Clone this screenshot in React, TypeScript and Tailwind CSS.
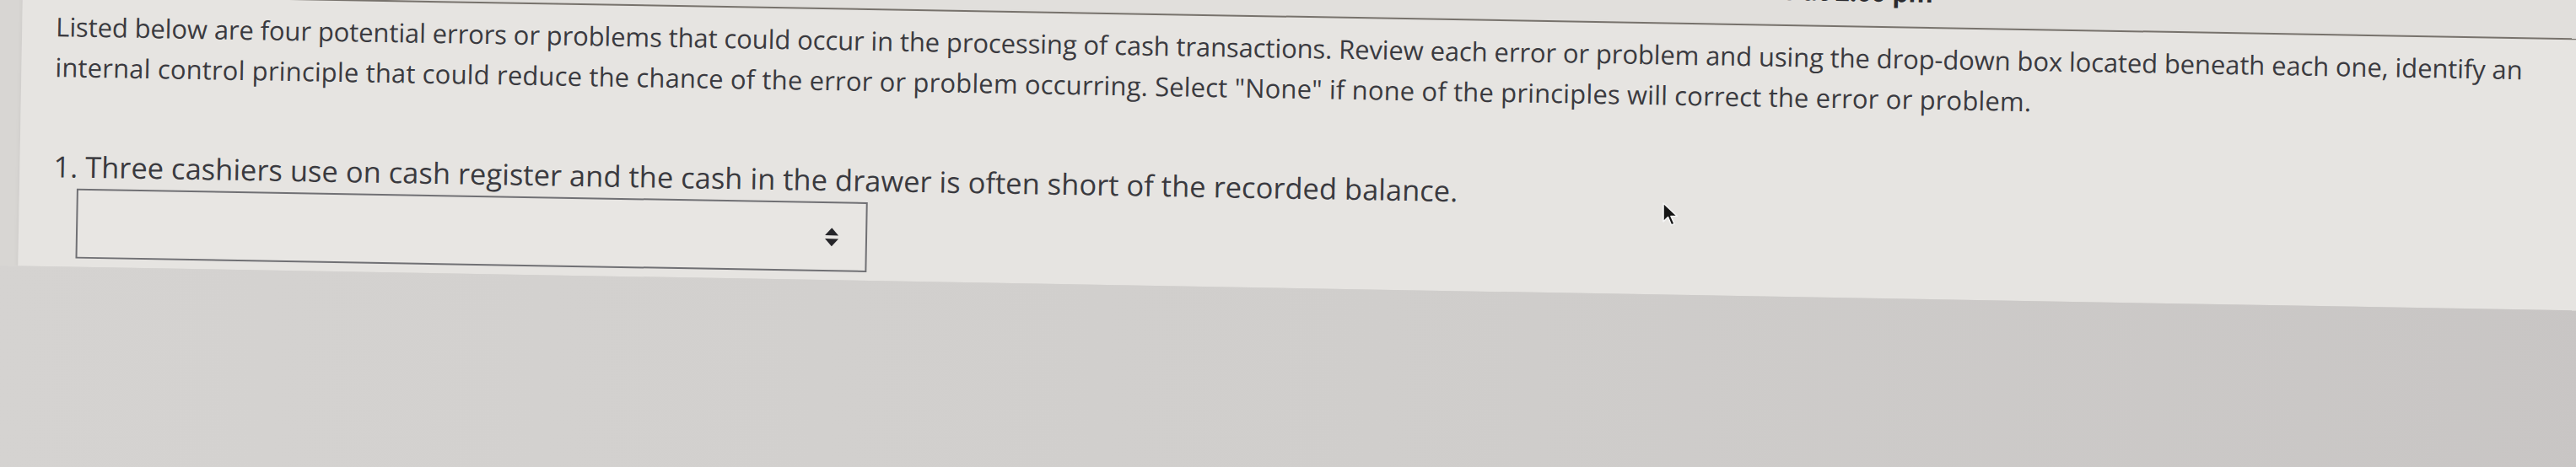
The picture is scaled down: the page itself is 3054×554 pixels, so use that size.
import React from 'react';

const SelectArrows: React.FC = () => (
  <svg width="16" height="22" viewBox="0 0 16 22" aria-hidden="true">
    <polygon points="8,0 16,9 0,9" fill="#26262a" />
    <polygon points="0,13 16,13 8,22" fill="#26262a" />
  </svg>
);

const Cursor: React.FC = () => (
  <svg width="22" height="30" viewBox="0 0 22 30" aria-hidden="true">
    <path
      d="M2 1 L2 23 L7.5 17.5 L11.5 27 L15 25.5 L11 16.5 L18.5 16.5 Z"
      fill="#151515"
      stroke="#f4f4f4"
      strokeWidth="1.6"
      strokeLinejoin="round"
    />
  </svg>
);

export default function App() {
  return (
    <div className="relative w-[3054px] h-[554px] overflow-hidden bg-[#e1dfdc] font-['Open_Sans',sans-serif]">
      {/* the screen was photographed at a slight tilt */}
      <div className="-mt-[68px] w-[3300px] h-[760px] flex flex-col origin-top-left rotate-1">
        <div className="h-[60px] flex items-end pb-[25px] pl-[2070px]">
          <span className="text-[30px] leading-[30px] font-bold text-[#2a2a2e]">Due at 2:00 pm</span>
        </div>

        <div className="flex">
          <div className="w-[28px] bg-[#d8d6d3]" />
          <div className="flex-1 bg-[#e6e4e1] border-t-2 border-[#77726c] pt-[12px] pl-[40px] pb-[10px] shadow-[0_3px_6px_rgba(0,0,0,0.06)]">
            <p className="text-[31px] leading-[48px] text-[#3a3a3f] whitespace-nowrap">
              <span className="tracking-[-0.12px]">
                Listed below are four potential errors or problems that could occur in the processing of cash transactions. Review each error or problem and using the drop-down box located beneath each one, identify an
              </span>
              <br />
              <span className="tracking-[0.15px]">
                internal control principle that could reduce the chance of the error or problem occurring. Select "None" if none of the principles will correct the error or problem.
              </span>
            </p>

            <div className="mt-[70px]">
              <p className="text-[34.5px] leading-[47px] text-[#3a3a3f] whitespace-nowrap">
                1. Three cashiers use on cash register and the cash in the drawer is often short of the recorded balance.
              </p>
              <div className="mt-[3px] ml-[28px] w-[938px] h-[83px] border-2 border-[#707074] bg-[#e8e6e3] flex items-center justify-end pr-[32px]">
                <SelectArrows />
              </div>
            </div>
          </div>
        </div>

        <div className="flex-1 bg-linear-to-r from-[#d5d3d1] via-[#d0cecc] to-[#c7c4c3]" />
      </div>

      <div className="absolute left-[1970px] top-[240px]">
        <Cursor />
      </div>
    </div>
  );
}
